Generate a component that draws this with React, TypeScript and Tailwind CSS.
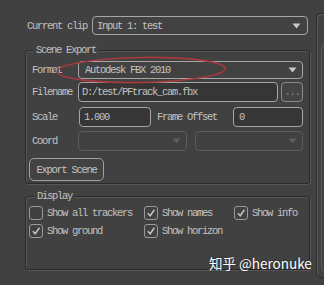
import React from "react";

function Arrow({ dim = false }: { dim?: boolean }) {
  return (
    <svg width="9" height="6" viewBox="0 0 9 6" className="shrink-0">
      <path d="M0.5 0.5 L8.5 0.5 L4.5 5.5 Z" fill={dim ? "#5e5e5e" : "#c8c8c8"} />
    </svg>
  );
}

function Check({ checked }: { checked: boolean }) {
  return (
    <div className="w-[14px] h-[14px] rounded-[3px] border border-[#9a9a9a] flex items-center justify-center shrink-0">
      {checked && (
        <svg width="10" height="10" viewBox="0 0 10 10">
          <path d="M1.8 5.2 L4.2 7.8 L8.4 1.8" fill="none" stroke="#c4c4c4" strokeWidth="1.5" />
        </svg>
      )}
    </div>
  );
}

function CheckItem({ checked, label }: { checked: boolean; label: string }) {
  return (
    <div className="flex items-center h-[14px]">
      <Check checked={checked} />
      <span className="ml-[4px] whitespace-nowrap">{label}</span>
    </div>
  );
}

export default function App() {
  return (
    <div className="w-[324px] h-[285px] bg-[#414141] overflow-hidden relative flex font-[family-name:'Liberation_Mono',monospace] text-[10.5px] tracking-[-1.3px] text-[#c2c2c2] leading-[12px]">
      <div className="w-[310px] shrink-0 pl-[25px] pt-[16px] flex flex-col">
        {/* Current clip */}
        <div className="flex items-center h-[19px] ml-[2px]">
          <span className="w-[65px] whitespace-nowrap">Current clip</span>
          <div className="w-[216px] h-[19px] rounded-[4px] border border-[#a6a6a6] bg-[#424242] flex items-center pl-[4px] pr-[6px]">
            <span className="flex-1 whitespace-nowrap">Input 1: test</span>
            <Arrow />
          </div>
        </div>

        {/* Scene Export */}
        <div className="mt-[15px] border border-[#2b2b2b] rounded-[3px] shadow-[inset_1px_1px_0_#565656,1px_1px_0_#565656] pl-[3px] pr-[6px] pb-[2px] flex flex-col">
          <div className="-mt-[7px] ml-[4px] px-[3px] bg-[#414141] w-fit h-[12px] whitespace-nowrap">Scene Export</div>

          <div className="mt-[5px] flex items-center h-[18px]">
            <span className="w-[46px] ml-[3px] whitespace-nowrap">Format</span>
            <div className="flex-1 h-[18px] rounded-[4px] border border-[#a6a6a6] bg-[#424242] flex items-center pl-[6px] pr-[5px]">
              <span className="flex-1 whitespace-nowrap">Autodesk FBX 2010</span>
              <Arrow />
            </div>
          </div>

          <div className="mt-[3px] flex items-center h-[20px]">
            <span className="w-[46px] ml-[3px] whitespace-nowrap">Filename</span>
            <div className="w-[200px] h-[20px] rounded-[4px] border border-[#a6a6a6] bg-[#363636] flex items-center pl-[3px]">
              <span className="whitespace-nowrap">D:/test/PFtrack_cam.fbx</span>
            </div>
            <div className="ml-[3px] flex-1 h-[20px] rounded-[4px] border border-[#8a8a8a] bg-[#444444] flex items-center justify-center text-[#8f8f8f]">
              ...
            </div>
          </div>

          <div className="mt-[5px] flex items-center h-[20px]">
            <span className="w-[47px] ml-[3px] whitespace-nowrap">Scale</span>
            <div className="w-[72px] h-[20px] rounded-[4px] border border-[#a6a6a6] bg-[#363636] flex items-center pl-[4px]">
              <span>1.000</span>
            </div>
            <span className="ml-[6px] w-[76px] whitespace-nowrap">Frame Offset</span>
            <div className="flex-1 h-[20px] rounded-[4px] border border-[#a6a6a6] bg-[#363636] flex items-center pl-[5px]">
              <span>0</span>
            </div>
          </div>

          <div className="mt-[4px] flex items-center h-[20px]">
            <span className="w-[46px] ml-[3px] whitespace-nowrap">Coord</span>
            <div className="w-[109px] h-[20px] rounded-[4px] border border-[#5c5c5c] bg-[#414141] flex items-center justify-end pr-[5px]">
              <Arrow dim />
            </div>
            <div className="ml-[8px] flex-1 h-[20px] rounded-[4px] border border-[#5c5c5c] bg-[#414141] flex items-center justify-end pr-[5px]">
              <Arrow dim />
            </div>
          </div>

          <div className="mt-[7px] w-[75px] h-[23px] rounded-[5px] border border-[#a0a0a0] bg-[#424242] flex items-center justify-center whitespace-nowrap">
            Export Scene
          </div>
        </div>

        {/* Display */}
        <div className="mt-[12px] h-[74px] border border-[#2b2b2b] rounded-[3px] shadow-[inset_1px_1px_0_#565656,1px_1px_0_#565656] pl-[3px] flex flex-col">
          <div className="-mt-[7px] ml-[5px] px-[3px] bg-[#414141] w-fit h-[12px] whitespace-nowrap">Display</div>
          <div className="mt-[4px] grid grid-cols-[115px_90px_auto] gap-y-[4px]">
            <CheckItem checked={false} label="Show all trackers" />
            <CheckItem checked label="Show names" />
            <CheckItem checked label="Show info" />
            <CheckItem checked label="Show ground" />
            <CheckItem checked label="Show horizon" />
          </div>
        </div>
      </div>

      {/* right side panel */}
      <div className="ml-[6px] mt-[13px] h-[265px] w-[20px] shrink-0 border border-r-0 border-[#2d2d2d] shadow-[inset_1px_1px_0_#5a5a5a] rounded-l-[5px] pl-[4px] pt-[31px] pb-[6px]">
        <div className="h-full border border-r-0 border-[#5a5a5a] rounded-l-[4px]" />
      </div>

      {/* red annotation ellipse */}
      <svg className="absolute left-0 top-0 pointer-events-none" width="324" height="285" viewBox="0 0 324 285">
        <ellipse cx="141" cy="70" rx="84" ry="12.5" fill="none" stroke="#a83a3f" strokeWidth="1.6" transform="rotate(-1 141 70)" />
      </svg>

      {/* watermark */}
      <div className="absolute left-[209px] top-[255px] text-white text-[13.5px] leading-[17px] tracking-normal font-[family-name:'Noto_Sans_CJK_SC','Noto_Sans',sans-serif] whitespace-nowrap [text-shadow:0_0_2px_rgba(0,0,0,0.5)]">
        知乎 @heronuke
      </div>
    </div>
  );
}
